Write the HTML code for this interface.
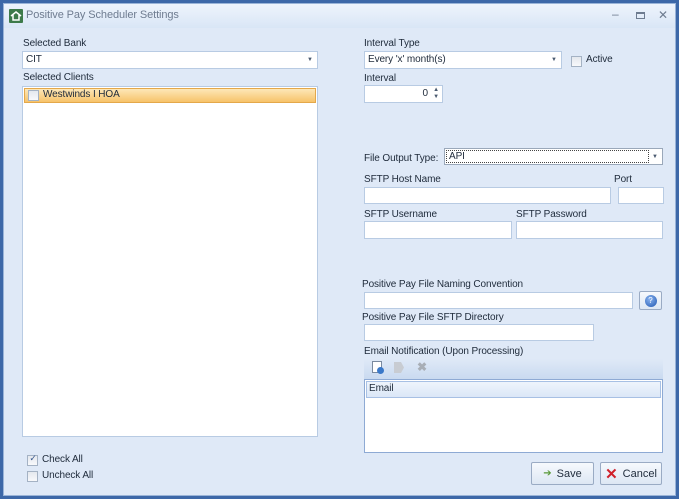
<!DOCTYPE html>
<html><head><style>
*{margin:0;padding:0;box-sizing:border-box}
body{width:679px;height:499px;overflow:hidden;background:#3d68a8;font-family:"Liberation Sans",sans-serif;font-size:10px;color:#1e2a3a;position:relative}
.win{position:absolute;left:3px;top:3px;width:673px;height:493px;background:#dfe9f7;border:1px solid #9ab4d8}
.tb{position:absolute;left:0;top:0;width:100%;height:24px;background:linear-gradient(#eef4fc,#d9e6f6)}
.a{position:absolute}
.lbl{position:absolute;font-size:10px;color:#1e2a3a;white-space:nowrap;letter-spacing:-0.1px}
.in{position:absolute;background:#fff;border:1px solid #b8cbe3}
.arr{position:absolute;right:4px;top:5px;font-size:6px;color:#4a5a70}
.cb{position:absolute;width:11px;height:11px;border:1px solid #a4b2c4;background:linear-gradient(#e4e8ee,#f8f9fb)}
.btn{position:absolute;border:1px solid #9aabc4;border-radius:2px;background:linear-gradient(#f6f9fd,#dde7f4);font-size:11px;display:flex;align-items:center;justify-content:center;gap:5px}
</style></head><body>
<div class="win">
<div class="tb"></div>
<div class="a" style="left:5px;top:5px;width:14px;height:14px;background:#3d7a4a;border-radius:1px"><svg width="14" height="14"><path d="M2 7 L7 3 L12 7 M4 6 V11 H10 V6" stroke="#fff" stroke-width="1.5" fill="none"/></svg></div>
<div class="lbl" style="left:22px;top:5px;font-size:11px;color:#6e7c90">Positive Pay Scheduler Settings</div>
<div class="lbl" style="left:608px;top:3px;font-size:12px;color:#6e7c90">–</div>
<div class="a" style="left:632px;top:8px;width:9px;height:7px;border:1px solid #6e7c90;border-top-width:2px"></div>
<div class="lbl" style="left:654px;top:4px;font-size:12px;color:#6e7c90">✕</div>

<div class="lbl" style="left:19px;top:34px">Selected Bank</div>
<div class="in" style="left:18px;top:47px;width:296px;height:18px"><span class="lbl" style="left:3px;top:2px">CIT</span><span class="arr">▼</span></div>
<div class="lbl" style="left:19px;top:68px">Selected Clients</div>
<div class="in" style="left:18px;top:82px;width:296px;height:351px">
 <div class="a" style="left:1px;top:1px;width:292px;height:15px;background:linear-gradient(#fde7b8,#f7c36a);border:1px solid #e4a84a"></div>
 <div class="cb" style="left:5px;top:3px"></div>
 <div class="lbl" style="left:20px;top:2px">Westwinds I HOA</div>
</div>
<div class="cb" style="left:23px;top:451px"></div><div class="lbl" style="left:23px;top:449px;font-size:9px;color:#3a5a90">&nbsp;✓</div>
<div class="lbl" style="left:38px;top:450px">Check All</div>
<div class="cb" style="left:23px;top:467px"></div>
<div class="lbl" style="left:38px;top:466px">Uncheck All</div>

<div class="lbl" style="left:360px;top:34px">Interval Type</div>
<div class="in" style="left:360px;top:47px;width:198px;height:18px"><span class="lbl" style="left:3px;top:2px">Every 'x' month(s)</span><span class="arr">▼</span></div>
<div class="cb" style="left:567px;top:52px"></div>
<div class="lbl" style="left:582px;top:50px">Active</div>
<div class="lbl" style="left:360px;top:69px">Interval</div>
<div class="in" style="left:360px;top:81px;width:79px;height:18px"><span class="lbl" style="right:14px;top:2px">0</span><span class="lbl" style="right:3px;top:1px;font-size:6px;line-height:7px;color:#4a5a70">▲<br>▼</span></div>

<div class="lbl" style="left:360px;top:149px">File Output Type:</div>
<div class="in" style="left:440px;top:144px;width:219px;height:17px;border-color:#9aa8ba"><span class="a" style="left:1px;top:1px;right:13px;bottom:1px;border:1px dotted #444"></span><span class="lbl" style="left:4px;top:2px">API</span><span class="arr">▼</span></div>

<div class="lbl" style="left:360px;top:170px">SFTP Host Name</div>
<div class="lbl" style="left:610px;top:170px">Port</div>
<div class="in" style="left:360px;top:183px;width:247px;height:17px"></div>
<div class="in" style="left:614px;top:183px;width:46px;height:17px"></div>
<div class="lbl" style="left:360px;top:205px">SFTP Username</div>
<div class="lbl" style="left:512px;top:205px">SFTP Password</div>
<div class="in" style="left:360px;top:217px;width:148px;height:18px"></div>
<div class="in" style="left:512px;top:217px;width:147px;height:18px"></div>

<div class="lbl" style="left:358px;top:275px">Positive Pay File Naming Convention</div>
<div class="in" style="left:360px;top:288px;width:269px;height:17px"></div>
<div class="btn" style="left:635px;top:287px;width:23px;height:19px"><span style="width:12px;height:12px;border-radius:50%;background:radial-gradient(circle at 40% 35%,#8ab4f0,#1f56b0);color:#fff;font-size:8px;display:flex;align-items:center;justify-content:center">?</span></div>
<div class="lbl" style="left:358px;top:308px">Positive Pay File SFTP Directory</div>
<div class="in" style="left:360px;top:320px;width:230px;height:17px"></div>
<div class="lbl" style="left:360px;top:342px">Email Notification (Upon Processing)</div>
<div class="a" style="left:360px;top:355px;width:299px;height:20px;background:linear-gradient(#dfe9f7,#c9daf0)"></div>
<div class="a" style="left:368px;top:357px;width:10px;height:12px;background:#fff;border:1px solid #7a8aa0"></div>
<div class="a" style="left:373px;top:363px;width:7px;height:7px;border-radius:50%;background:#3a78c8"></div>
<div class="a" style="left:390px;top:358px;width:10px;height:11px;background:#c8ccd2;clip-path:polygon(0 0,70% 0,100% 50%,70% 100%,0 100%)"></div>
<div class="lbl" style="left:413px;top:356px;font-size:12px;color:#a8aeb6;font-weight:bold">✖</div>
<div class="in" style="left:360px;top:375px;width:299px;height:74px;border-color:#8eaad4">
 <div class="a" style="left:1px;top:1px;width:295px;height:17px;background:linear-gradient(#eef4fc,#dbe7f7);border:1px solid #a7c0e4"></div>
 <div class="lbl" style="left:4px;top:3px">Email</div>
</div>
<div class="btn" style="left:527px;top:458px;width:63px;height:23px"><span style="color:#5a9a3a;font-size:10px">➔</span>Save</div>
<div class="btn" style="left:596px;top:458px;width:62px;height:23px"><span style="color:#d0202a;font-size:15px;font-weight:bold">✕</span>Cancel</div>
</div>
</body></html>
